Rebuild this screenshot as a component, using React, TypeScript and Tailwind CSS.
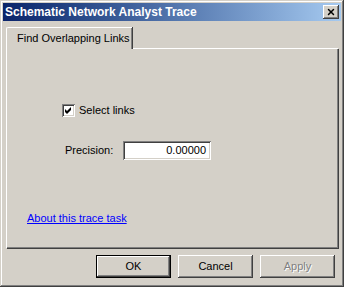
import { X } from "lucide-react";

const raised =
  "shadow-[inset_-1px_-1px_#404040,inset_1px_1px_#ffffff,inset_-2px_-2px_#808080,inset_2px_2px_#d4d0c8]";
const sunken =
  "shadow-[inset_1px_1px_#808080,inset_-1px_-1px_#ffffff,inset_2px_2px_#404040,inset_-2px_-2px_#d4d0c8]";

const DialogButton = ({
  label,
  isDefault,
  disabled,
}: {
  label: string;
  isDefault?: boolean;
  disabled?: boolean;
}) => (
  <div
    className={`w-[75px] h-[23px] flex items-center justify-center bg-[#d4d0c8] ${
      isDefault
        ? "border border-black shadow-[inset_-1px_-1px_#404040,inset_1px_1px_#ffffff,inset_-2px_-2px_#808080]"
        : raised
    }`}
  >
    <span
      className={
        disabled ? "text-[#808080] [text-shadow:1px_1px_#ffffff]" : "text-black"
      }
    >
      {label}
    </span>
  </div>
);

export default function App() {
  return (
    <div className="w-[344px] h-[287px] bg-[#d4d0c8] p-[3px] flex flex-col font-['Liberation_Sans',Arial,sans-serif] text-[11px] text-black shadow-[inset_-1px_-1px_#404040,inset_1px_1px_#d4d0c8,inset_-2px_-2px_#808080,inset_2px_2px_#ffffff]">
      {/* title bar */}
      <div className="h-[18px] flex items-center justify-between bg-linear-to-r from-[#0a246a] to-[#a6caf0] pl-[2px] pr-[2px]">
        <span className="text-white font-bold text-[12px] leading-none">
          Schematic Network Analyst Trace
        </span>
        <div className={`w-[16px] h-[14px] flex items-center justify-center bg-[#d4d0c8] ${raised}`}>
          <X className="w-[10px] h-[10px] text-black" strokeWidth={3.5} />
        </div>
      </div>

      {/* tabs */}
      <div className="flex flex-col px-[3px] pt-[6px]">
        <div className="flex">
          <div className="relative z-10 -mb-px w-[126px] h-[22px] flex items-center pl-[10px] bg-[#d4d0c8] border-l border-t border-white rounded-tl-[2px] shadow-[inset_-1px_0_#808080,1px_0_#404040]">
            Find Overlapping Links
          </div>
        </div>
        <div className="h-[200px] flex flex-col border-l border-t border-white shadow-[inset_-1px_-1px_#808080,1px_1px_#404040]">
          <div className="flex items-center gap-[4px] ml-[55px] mt-[53px]">
            <div className={`w-[13px] h-[13px] bg-white flex items-center justify-center ${sunken}`}>
              <svg width="7" height="7" viewBox="0 0 7 7">
                <path d="M0 2 L2 4 L6 0 L6 3 L2 7 L0 5 Z" fill="#000" />
              </svg>
            </div>
            <span>Select links</span>
          </div>

          <div className="flex items-center ml-[58px] mt-[22px]">
            <span className="w-[58px]">Precision:</span>
            <div className={`w-[88px] h-[19px] bg-white flex items-center justify-end pr-[5px] ${sunken}`}>
              0.00000
            </div>
          </div>

          <a className="ml-[20px] mt-[50px] text-[#0000ff] underline self-start">
            About this trace task
          </a>
        </div>
      </div>

      {/* buttons */}
      <div className="flex justify-end gap-[7px] pr-[6px] mt-[7px]">
        <DialogButton label="OK" isDefault />
        <DialogButton label="Cancel" />
        <DialogButton label="Apply" disabled />
      </div>
    </div>
  );
}
